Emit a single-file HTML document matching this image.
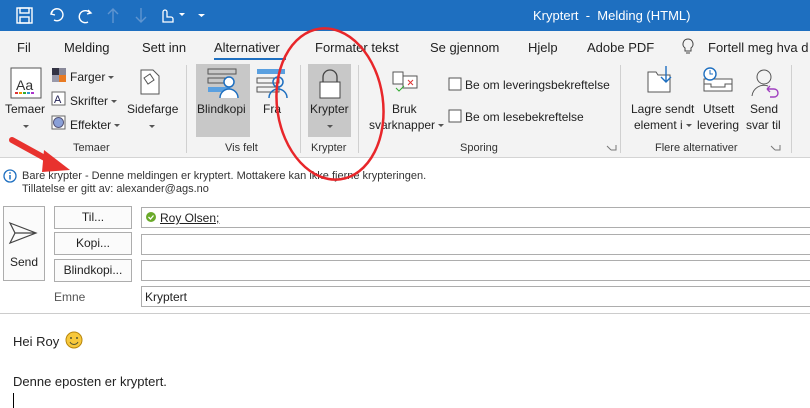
<!DOCTYPE html>
<html><head><meta charset="utf-8"><style>
*{margin:0;padding:0;box-sizing:border-box}
body{width:810px;height:408px;overflow:hidden;background:#fff;font-family:"Liberation Sans",sans-serif;position:relative;color:#222}
.a{position:absolute;white-space:nowrap}
.title{left:0;top:0;width:810px;height:31px;background:#1e6fc0}
.tabs{left:0;top:31px;width:810px;height:31px;background:#f3f3f3}
.rib{left:0;top:62px;width:810px;height:96px;background:#f3f3f3;border-bottom:1px solid #d4d4d4}
.t13{font-size:13px}
.t12{font-size:12px}
.t11{font-size:11px;color:#333}
.sep{width:1px;background:#d0d0d0}
.btn{border:1px solid #adadad;background:#fbfbfb;font-size:12px;text-align:center;line-height:20px}
.fld{border:1px solid #adadad;background:#fff;height:21px}
.dd{display:inline-block;width:0;height:0;border-left:3px solid transparent;border-right:3px solid transparent;border-top:3px solid #555;vertical-align:middle;margin-left:3px}
.dda{position:absolute;width:0;height:0;border-left:3px solid transparent;border-right:3px solid transparent;border-top:3px solid #555}
</style></head><body>
<div class="a title"></div>
<div class="a t13" style="left:533px;top:8px;color:#fff">Kryptert&nbsp; - &nbsp;Melding (HTML)</div>
<svg class="a" style="left:0;top:0" width="220" height="31">
<g stroke="#fff" fill="none" stroke-width="1.4">
<rect x="17" y="8" width="15" height="15"/><rect x="20" y="8" width="9" height="5"/><rect x="20" y="17" width="9" height="6"/>
<path d="M53 10 l-2 4 4 1 M51 14 a6 6 0 1 1 3 6"/>
<path d="M88 10 l3 3 -4 1 M90 13 a6 6 0 1 0 -2 9"/>
</g>
<g stroke="#5f95d0" fill="none" stroke-width="1.4"><path d="M113 23 V9 M108 14 l5 -5 5 5"/><path d="M141 8 V22 M136 17 l5 5 5 -5"/></g>
<g stroke="#fff" fill="none" stroke-width="1.3"><path d="M163 22 v-10 a2 2 0 0 1 4 0 v5 h4 a2 2 0 0 1 2 2 v3 z"/></g>
<path d="M179 13 h6 l-3 3z M198 11 h7 M198 14 h7 l-3.5 3z" fill="#fff"/>
</svg>
<div class="a tabs"></div>
<div class="a t13" style="left:17px;top:40px">Fil</div>
<div class="a t13" style="left:64px;top:40px">Melding</div>
<div class="a t13" style="left:142px;top:40px">Sett inn</div>
<div class="a t13" style="left:214px;top:40px">Alternativer</div>
<div class="a" style="left:214px;top:58px;width:72px;height:2px;background:#1e6fc0"></div>
<div class="a t13" style="left:315px;top:40px">Formater tekst</div>
<div class="a t13" style="left:430px;top:40px">Se gjennom</div>
<div class="a t13" style="left:528px;top:40px">Hjelp</div>
<div class="a t13" style="left:587px;top:40px">Adobe PDF</div>
<div class="a t13" style="left:708px;top:40px">Fortell meg hva d</div>
<svg class="a" style="left:681px;top:38px" width="14" height="18"><path d="M7 1a5 5 0 0 0-3 9v3h6v-3a5 5 0 0 0-3-9zM5 15h4" stroke="#444" fill="none"/></svg>
<div class="a rib"></div>
<div class="a" style="left:196px;top:64px;width:54px;height:73px;background:#c8c8c8"></div>
<div class="a" style="left:308px;top:64px;width:43px;height:73px;background:#c8c8c8"></div>
<svg class="a" style="left:0;top:62px" width="810" height="96">
<rect x="11" y="6" width="30" height="30" fill="#fff" stroke="#555"/><text x="16" y="28" font-size="14" font-family="Liberation Sans" fill="#333">Aa</text>
<g><rect x="15" y="30" width="3" height="2" fill="#d33"/><rect x="19" y="30" width="3" height="2" fill="#e90"/><rect x="23" y="30" width="3" height="2" fill="#3a3"/><rect x="27" y="30" width="3" height="2" fill="#39c"/><rect x="31" y="30" width="3" height="2" fill="#a3c"/></g>
<rect x="52" y="6" width="7" height="7" fill="#334"/><rect x="59" y="6" width="7" height="7" fill="#889"/><rect x="52" y="13" width="7" height="7" fill="#99a"/><rect x="59" y="13" width="7" height="7" fill="#e87a22"/>
<rect x="52" y="30" width="13" height="13" fill="#fff" stroke="#666"/><text x="54" y="41" font-size="11" fill="#225">A</text>
<rect x="52" y="54" width="13" height="13" fill="#fff" stroke="#666"/><circle cx="58.5" cy="60.5" r="5" fill="#8aa0d8" stroke="#557"/>
<path d="M141 8h12l6 6v18h-18z" fill="#fff" stroke="#555"/><path d="M144 16l6-4 4 6-6 4z" fill="#fff" stroke="#555"/>
<g fill="none" stroke="#555"><rect x="208" y="7" width="28" height="5"/><rect x="208" y="16" width="22" height="5"/></g><rect x="208" y="25" width="22" height="5" fill="#5aa0e0"/><circle cx="229" cy="20" r="5" fill="#fff" stroke="#1e6fc0" stroke-width="1.5"/><path d="M220 36a9 9 0 0 1 18 0" fill="#fff" stroke="#1e6fc0" stroke-width="1.5"/>
<rect x="257" y="7" width="28" height="5" fill="#5aa0e0"/><g fill="none" stroke="#555"><rect x="257" y="16" width="22" height="5"/><rect x="257" y="25" width="22" height="5"/></g><circle cx="278" cy="20" r="5" fill="none" stroke="#1e6fc0" stroke-width="1.5"/><path d="M269 36a9 9 0 0 1 18 0" fill="none" stroke="#1e6fc0" stroke-width="1.5"/>
<path d="M323 20v-5a7 7 0 0 1 14 0v5" fill="none" stroke="#444" stroke-width="1.3"/><rect x="320" y="20" width="20" height="16" fill="#fff" stroke="#444"/>
<rect x="393" y="10" width="10" height="12" fill="#fff" stroke="#555"/><rect x="403" y="14" width="14" height="12" fill="#fff" stroke="#555"/><path d="M396 26l3 3 5-5" stroke="#3a3" fill="none"/><path d="M408 18l5 5m0-5l-5 5" stroke="#d33"/>
<rect x="449" y="16" width="12" height="12" fill="#fff" stroke="#555"/><rect x="449" y="48" width="12" height="12" fill="#fff" stroke="#555"/>
<path d="M648 10h8l2 3h12v17h-22z" fill="#fff" stroke="#555"/><path d="M666 4v16m-5-5l5 5 5-5" stroke="#1e6fc0" fill="none" stroke-width="1.4"/>
<path d="M704 17h28v12h-28z" fill="#fff" stroke="#555"/><path d="M704 22h7v3h14v-3h7" fill="none" stroke="#555"/><circle cx="710" cy="12" r="6" fill="#fff" stroke="#1e6fc0" stroke-width="1.4"/><path d="M710 8v4h3" stroke="#1e6fc0" fill="none"/>
<circle cx="764" cy="15" r="7" fill="none" stroke="#555"/><path d="M752 34a12 12 0 0 1 16-10" fill="none" stroke="#555"/><path d="M768 27h6a4 4 0 0 1 0 8h-4m-3-8l3-3m-3 3l3 3" stroke="#a040c0" fill="none" stroke-width="1.4"/>
<path d="M611 88h5v-5 M607 84l4 4 M775 88h5v-5 M771 84l4 4" stroke="#777" fill="none"/>
</svg>
<div class="a t12" style="left:5px;top:102px">Temaer</div>
<div class="dda" style="left:23px;top:125px"></div>
<div class="a t12" style="left:70px;top:70px">Farger<span class="dd"></span></div>
<div class="a t12" style="left:70px;top:94px">Skrifter<span class="dd"></span></div>
<div class="a t12" style="left:70px;top:118px">Effekter<span class="dd"></span></div>
<div class="a t12" style="left:127px;top:102px">Sidefarge</div>
<div class="dda" style="left:149px;top:125px"></div>
<div class="a t11" style="left:73px;top:142px">Temaer</div>
<div class="a sep" style="left:186px;top:65px;height:88px"></div>
<div class="a t12" style="left:197px;top:102px">Blindkopi</div>
<div class="a t12" style="left:263px;top:102px">Fra</div>
<div class="a t11" style="left:225px;top:142px">Vis felt</div>
<div class="a sep" style="left:300px;top:65px;height:88px"></div>
<div class="a t12" style="left:310px;top:102px">Krypter</div>
<div class="dda" style="left:327px;top:125px"></div>
<div class="a t11" style="left:311px;top:142px">Krypter</div>
<div class="a sep" style="left:358px;top:65px;height:88px"></div>
<div class="a t12" style="left:392px;top:102px">Bruk</div>
<div class="a t12" style="left:369px;top:118px">svarknapper<span class="dd"></span></div>
<div class="a t12" style="left:465px;top:78px">Be om leveringsbekreftelse</div>
<div class="a t12" style="left:465px;top:110px">Be om lesebekreftelse</div>
<div class="a t11" style="left:460px;top:142px">Sporing</div>
<div class="a sep" style="left:620px;top:65px;height:88px"></div>
<div class="a t12" style="left:631px;top:102px">Lagre sendt</div>
<div class="a t12" style="left:634px;top:118px">element i<span class="dd"></span></div>
<div class="a t12" style="left:703px;top:102px">Utsett</div>
<div class="a t12" style="left:697px;top:118px">levering</div>
<div class="a t12" style="left:750px;top:102px">Send</div>
<div class="a t12" style="left:746px;top:118px">svar til</div>
<div class="a t11" style="left:655px;top:142px">Flere alternativer</div>
<div class="a sep" style="left:791px;top:65px;height:88px"></div>
<svg class="a" style="left:3px;top:169px" width="14" height="14"><circle cx="7" cy="7" r="6" fill="none" stroke="#1e6fc0" stroke-width="1.3"/><path d="M7 6v4.5" stroke="#1e6fc0" stroke-width="1.5"/><circle cx="7" cy="4" r="0.9" fill="#1e6fc0"/></svg>
<div class="a t11" style="left:22px;top:170px">Bare krypter - Denne meldingen er kryptert. Mottakere kan ikke fjerne krypteringen.</div>
<div class="a t11" style="left:22px;top:183px">Tillatelse er gitt av: alexander@ags.no</div>
<div class="a btn" style="left:3px;top:206px;width:42px;height:75px"></div>
<svg class="a" style="left:8px;top:221px" width="30" height="24"><path d="M2 2l26 10-26 10 5-10z M7 12h21" fill="none" stroke="#444" stroke-width="1.2"/></svg>
<div class="a t12" style="left:10px;top:255px">Send</div>
<div class="a btn" style="left:54px;top:206px;width:78px;height:23px">Til...</div>
<div class="a btn" style="left:54px;top:232px;width:78px;height:23px">Kopi...</div>
<div class="a btn" style="left:54px;top:259px;width:78px;height:23px">Blindkopi...</div>
<div class="a fld" style="left:141px;top:207px;width:670px"></div>
<div class="a fld" style="left:141px;top:234px;width:670px"></div>
<div class="a fld" style="left:141px;top:260px;width:670px"></div>
<div class="a fld" style="left:141px;top:286px;width:670px"></div>
<svg class="a" style="left:146px;top:212px" width="10" height="10"><circle cx="5" cy="5" r="5" fill="#6aaa2a"/><path d="M2.5 5l2 2 3-3.5" stroke="#fff" fill="none" stroke-width="1.3"/></svg>
<div class="a t12" style="left:160px;top:211px;text-decoration:underline">Roy Olsen;</div>
<div class="a t12" style="left:54px;top:290px;color:#555">Emne</div>
<div class="a t12" style="left:145px;top:290px">Kryptert</div>
<div class="a" style="left:0;top:313px;width:810px;height:1px;background:#ccc"></div>
<div class="a t13" style="left:13px;top:334px">Hei Roy</div>
<svg class="a" style="left:65px;top:331px" width="18" height="18"><circle cx="9" cy="9" r="8" fill="#f7c83c" stroke="#b8860b"/><circle cx="6" cy="7" r="1" fill="#553"/><circle cx="12" cy="7" r="1" fill="#553"/><path d="M5 11a4.5 4.5 0 0 0 8 0" stroke="#553" fill="none"/></svg>
<div class="a t13" style="left:13px;top:374px">Denne eposten er kryptert.</div>
<div class="a" style="left:13px;top:393px;width:1px;height:15px;background:#000"></div>
<svg class="a" style="left:0;top:0" width="810" height="408">
<ellipse cx="330" cy="104" rx="53" ry="76" fill="none" stroke="#e8262a" stroke-width="2.5" transform="rotate(-8 330 104)"/>
<path d="M12 140 L52 162" stroke="#e8322e" stroke-width="6" stroke-linecap="round"/>
<path d="M44 150 L70 170 L42 172z" fill="#e8322e"/>
</svg>
</body></html>
